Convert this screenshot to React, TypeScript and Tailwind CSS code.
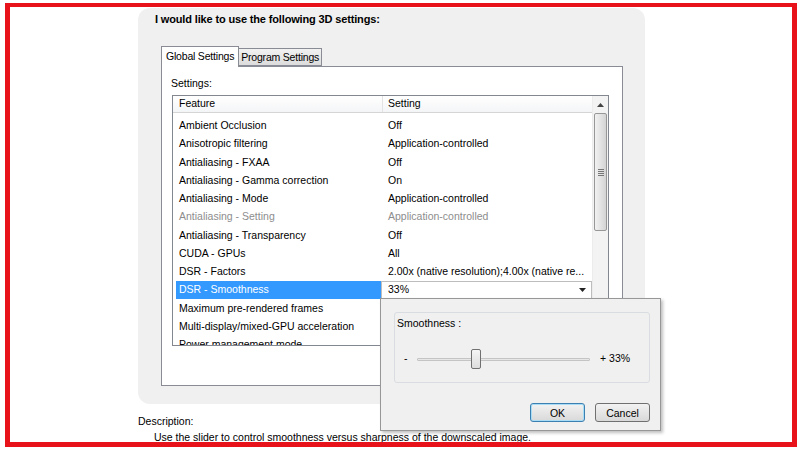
import React from 'react';

const rows: { feature: string; setting: string; disabled?: boolean; selected?: boolean }[] = [
    { feature: 'Ambient Occlusion', setting: 'Off' },
    { feature: 'Anisotropic filtering', setting: 'Application-controlled' },
    { feature: 'Antialiasing - FXAA', setting: 'Off' },
    { feature: 'Antialiasing - Gamma correction', setting: 'On' },
    { feature: 'Antialiasing - Mode', setting: 'Application-controlled' },
    { feature: 'Antialiasing - Setting', setting: 'Application-controlled', disabled: true },
    { feature: 'Antialiasing - Transparency', setting: 'Off' },
    { feature: 'CUDA - GPUs', setting: 'All' },
    { feature: 'DSR - Factors', setting: '2.00x (native resolution);4.00x (native re...' },
    { feature: 'DSR - Smoothness', setting: '33%', selected: true },
    { feature: 'Maximum pre-rendered frames', setting: '' },
    { feature: 'Multi-display/mixed-GPU acceleration', setting: '' },
    { feature: 'Power management mode', setting: '' },
];

function Scrollbar() {
    return (
        <div className="w-[16px] flex flex-col bg-[#f3f3f3] border-l border-[#ececec]">
            <div className="h-[17px] flex items-center justify-center">
                <svg width="7" height="4" viewBox="0 0 7 4"><path d="M0 4 L3.5 0 L7 4 Z" fill="#444" /></svg>
            </div>
            <div className="mx-[1px] h-[118px] rounded-[2px] border border-[#979797] bg-gradient-to-r from-[#f1f1f1] via-[#e3e3e3] to-[#d4d4d4] flex items-center justify-center">
                <div className="flex flex-col gap-[1px]">
                    <div className="w-[6px] h-px bg-[#777]" />
                    <div className="w-[6px] h-px bg-[#777]" />
                    <div className="w-[6px] h-px bg-[#777]" />
                    <div className="w-[6px] h-px bg-[#777]" />
                </div>
            </div>
        </div>
    );
}

export default function App() {
    return (
        <div className="w-[800px] h-[450px] bg-white overflow-hidden font-['Liberation_Sans',Arial,sans-serif] text-[10.5px] text-black">
            <div className="relative ml-[5px] mt-[3px] w-[792px] h-[444px] border-x-[5px] border-t-[4px] border-b-[5px] border-[#e8121a] overflow-hidden">
                <div className="flex flex-col pl-[128px]">
                    <div className="mt-[1px] w-[507px] h-[396px] rounded-[12px] bg-[#f0f0f0] pt-[4px] pl-[17px]">
                        <h1 className="font-bold text-[11px] leading-[14px] tracking-[-0.15px]">I would like to use the following 3D settings:</h1>
                        <div className="mt-[20px] ml-[6px] flex items-end tracking-[-0.2px]">
                            <div className="relative z-10 -mb-px h-[21px] px-[4px] border border-b-0 border-[#898c95] bg-white leading-[18px]">Global Settings</div>
                            <div className="h-[18px] px-[2px] border border-l-0 border-[#898c95] bg-gradient-to-b from-[#f2f2f2] to-[#dcdcdc] leading-[16px]">Program Settings</div>
                        </div>
                        <div className="ml-[6px] w-[462px] h-[320px] border border-[#898c95] bg-white pl-[10px] pt-[9px]">
                            <div className="leading-[14px] -ml-[1px]">Settings:</div>
                            <div className="mt-[5px] w-[437px] h-[251px] border border-[#828790] bg-white flex overflow-hidden">
                                <div className="flex-1 flex flex-col">
                                    <div className="h-[20px] flex items-center border-b border-[#d5d5d5] bg-gradient-to-b from-white to-[#f4f5f7]">
                                        <div className="w-[210px] h-full pl-[6px] flex items-center border-r border-[#e3e3e3]">Feature</div>
                                        <div className="pl-[5px]">Setting</div>
                                    </div>
                                    <div className="pt-[4px] flex flex-col">
                                        {rows.map((r) => (
                                            <div key={r.feature} className={`h-[18.25px] flex items-stretch ${r.disabled ? 'text-[#8d8d8d]' : ''}`}>
                                                <div className={`ml-[3px] w-[205px] pl-[3px] flex items-center ${r.selected ? 'bg-[#3399ff] text-white' : ''}`}>{r.feature}</div>
                                                {r.selected ? (
                                                    <div className="flex-1 flex items-center justify-between pl-[6px] pr-[5px] border border-[#bdbdbd] bg-white">
                                                        <span>33%</span>
                                                        <svg width="7" height="4" viewBox="0 0 7 4"><path d="M0 0 L7 0 L3.5 4 Z" fill="#222" /></svg>
                                                    </div>
                                                ) : (
                                                    <div className="flex-1 pl-[7px] flex items-center whitespace-nowrap">{r.setting}</div>
                                                )}
                                            </div>
                                        ))}
                                    </div>
                                </div>
                                <Scrollbar />
                            </div>
                        </div>
                    </div>
                    <div className="mt-[10px] leading-[14px]">Description:</div>
                    <div className="mt-[2px] ml-[16px] leading-[14px] whitespace-nowrap">Use the slider to control smoothness versus sharpness of the downscaled image.</div>
                </div>

                {/* dropdown popup */}
                <div className="absolute left-[370px] top-[291px] w-[281px] h-[133px] bg-[#f0f0f0] border border-[#979797] shadow-[2px_2px_3px_rgba(0,0,0,0.25)] pt-[13px] pl-[13px] pr-[10px]">
                    <div className="w-[256px] h-[71px] border border-[#d9dde2] rounded-[3px] pl-[2px] pt-[3px]">
                        <div className="leading-[14px]">Smoothness :</div>
                        <div className="mt-[19px] flex items-center h-[20px]">
                            <span className="ml-[7px] w-[13px]">-</span>
                            <div className="relative w-[173px] h-[20px] flex items-center">
                                <div className="w-full h-[3px] border border-[#c4c4c4] bg-[#e7e7e7] rounded-[1px]" />
                                <div className="absolute left-[54px] top-0 w-[10px] h-[20px] rounded-[2px] border border-[#707070] bg-gradient-to-b from-[#f6f6f6] to-[#dcdcdc]" />
                            </div>
                            <span className="ml-[10px]">+ 33%</span>
                        </div>
                    </div>
                    <div className="mt-[20px] flex justify-end gap-[10px]">
                        <button className="w-[55px] h-[19px] rounded-[3px] border border-[#3c7fb1] shadow-[inset_0_0_0_1px_#a9dcf5] bg-gradient-to-b from-[#f2f2f2] to-[#d9d9d9] leading-[16px]">OK</button>
                        <button className="w-[55px] h-[19px] rounded-[3px] border border-[#707070] bg-gradient-to-b from-[#f2f2f2] to-[#d9d9d9] leading-[16px]">Cancel</button>
                    </div>
                </div>
            </div>
        </div>
    );
}
